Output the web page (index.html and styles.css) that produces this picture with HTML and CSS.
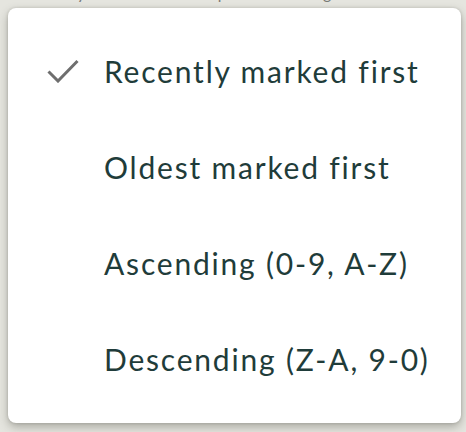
FILE: index.html
```html
<!DOCTYPE html>
<html lang="en">
<head>
<meta charset="utf-8">
<title>Sort menu</title>
<link rel="stylesheet" href="styles.css">
</head>
<body>
<div class="backdrop">
  <p class="backdrop-line">Sorted by the date it was put on the big list</p>
</div>
<ul class="menu">
  <li class="menu-item">
    <span class="check-slot">
      <svg class="check" viewBox="0 0 32 24" width="32" height="24">
        <path d="M1.5 12.5 L11 22 L30.5 2" fill="none" stroke="#6e6e6e" stroke-width="3"/>
      </svg>
    </span>
    <span class="label">Recently marked first</span>
  </li>
  <li class="menu-item">
    <span class="check-slot"></span>
    <span class="label">Oldest marked first</span>
  </li>
  <li class="menu-item">
    <span class="check-slot"></span>
    <span class="label">Ascending (0-9, A-Z)</span>
  </li>
  <li class="menu-item">
    <span class="check-slot"></span>
    <span class="label">Descending (Z-A, 9-0)</span>
  </li>
</ul>
</body>
</html>
```
FILE: styles.css
```css
html, body {
  margin: 0;
  padding: 0;
}

body {
  background: #e5e5df;
  font-family: "Lato", "Noto Sans", sans-serif;
  height: 432px;
  overflow: hidden;
}

.backdrop {
  height: 8px;
  overflow: hidden;
}

.backdrop-line {
  margin: -17px 0 0 8px;
  font-size: 16px;
  line-height: 20px;
  color: #7a7a76;
  letter-spacing: 1.2px;
  white-space: nowrap;
}

.menu {
  list-style: none;
  margin: 0 5px 0 8px;
  padding: 15px 0 16px;
  background: #ffffff;
  border-radius: 8px;
  box-shadow: 0 4px 10px rgba(60, 60, 50, 0.35), 0 0 3px rgba(60, 60, 50, 0.2);
}

.menu-item {
  display: flex;
  align-items: center;
  height: 96px;
}

.check-slot {
  display: flex;
  align-items: center;
  width: 32px;
  margin-left: 39px;
  margin-right: 25px;
}

.check {
  display: block;
}

.label {
  font-size: 30px;
  letter-spacing: 1.8px;
  color: #1f3c3a;
  white-space: nowrap;
}
```
